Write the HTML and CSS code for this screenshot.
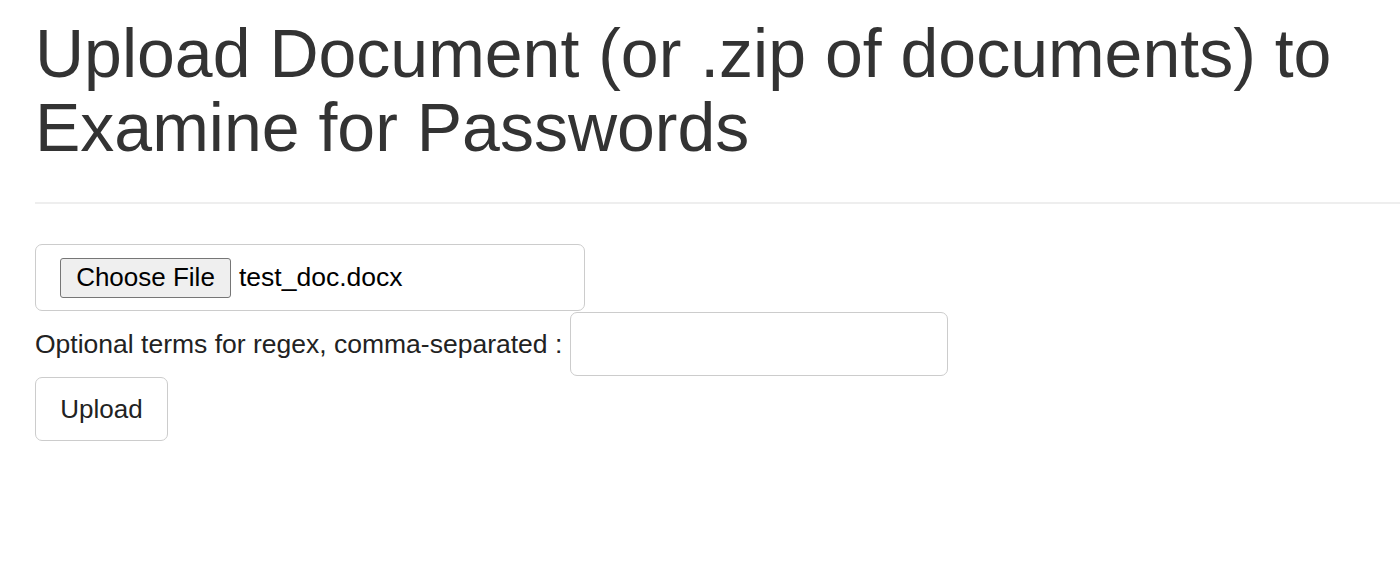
FILE: index.html
```html
<!DOCTYPE html>
<html lang="en">
  <head>
    <meta charset="UTF-8" />
    <title>Upload Document</title>
    <link rel="stylesheet" href="styles.css">
  </head>
  <body>
    <div id="main">
      <h1 class="title">Upload Document (or .zip of documents) to Examine for Passwords</h1>
      <hr class="divider" />
      <form class="upload-form">
        <div class="file-box">
          <button type="button" class="file-button">Choose File</button>
          <span class="file-name">test_doc.docx</span>
        </div>
        <div class="terms-row">
          <label for="terms" class="terms-label">Optional terms for regex, comma-separated :</label>
          <input id="terms" class="terms-input" type="text" />
        </div>
        <button type="button" class="upload-button">Upload</button>
      </form>
    </div>
  </body>
</html>
```

FILE: styles.css
```css
* {
  margin: 0;
  padding: 0;
  box-sizing: border-box;
  font-family: "Liberation Sans", Arial, sans-serif;
}

html,
body {
  background-color: #fff;
  color: #333;
  overflow: hidden;
}

#main {
  padding: 16px 0 0 35px;
}

.title {
  font-size: 68px;
  font-weight: 400;
  line-height: 74px;
  color: #333;
}

.divider {
  border: 0;
  border-top: 2px solid #eee;
  margin: 38px 0 40px;
}

.upload-form {
  display: flex;
  flex-direction: column;
  align-items: flex-start;
}

.file-box {
  width: 550px;
  height: 67px;
  border: 1px solid #ccc;
  border-radius: 7px;
  display: flex;
  align-items: center;
  padding-left: 24px;
  font-size: 26.5px;
  color: #000;
}

.file-button {
  height: 40px;
  width: 171px;
  font-size: 26px;
  color: #000;
  background-color: #efefef;
  border: 1px solid #767676;
  border-radius: 3px;
  margin-right: 8px;
}

.terms-row {
  display: flex;
  align-items: center;
  margin-top: 1px;
}

.terms-label {
  font-size: 26.5px;
  color: #222;
  margin-right: 8px;
}

.terms-input {
  width: 378px;
  height: 64px;
  border: 1px solid #ccc;
  border-radius: 7px;
}

.upload-button {
  width: 133px;
  height: 64px;
  margin-top: 1px;
  font-size: 26px;
  color: #222;
  background-color: #fff;
  border: 1px solid #ccc;
  border-radius: 7px;
}
```
